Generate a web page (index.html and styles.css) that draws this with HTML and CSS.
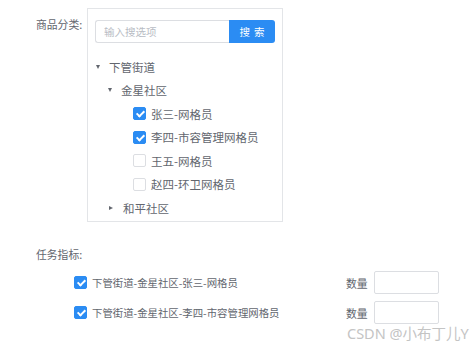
FILE: index.html
```html
<!DOCTYPE html>
<html lang="zh-CN">
<head>
    <meta charset="UTF-8">
    <title>商品分类</title>
    <link rel="stylesheet" href="styles.css">
</head>
<body>
    <div class="page">
        <div class="form-row">
            <label class="form-label">商品分类:</label>
            <div class="tree-panel">
                <div class="search">
                    <input type="text" placeholder="输入搜选项">
                    <button>搜索</button>
                </div>
                <ul class="tree">
                    <li class="node lv1"><span class="arrow down"></span>下管街道</li>
                    <li class="node lv2"><span class="arrow down"></span>金星社区</li>
                    <li class="node lv3"><span class="check on"></span>张三-网格员</li>
                    <li class="node lv3"><span class="check on"></span>李四-市容管理网格员</li>
                    <li class="node lv3"><span class="check"></span>王五-网格员</li>
                    <li class="node lv3"><span class="check"></span>赵四-环卫网格员</li>
                    <li class="node lv2"><span class="arrow right"></span>和平社区</li>
                </ul>
            </div>
        </div>

        <div class="task">
            <div class="form-label">任务指标:</div>
            <div class="task-row">
                <span class="check on"></span>
                <span class="task-name">下管街道-金星社区-张三-网格员</span>
                <span class="qty-label">数量</span>
                <input class="qty" type="text">
            </div>
            <div class="task-row">
                <span class="check on"></span>
                <span class="task-name">下管街道-金星社区-李四-市容管理网格员</span>
                <span class="qty-label">数量</span>
                <input class="qty" type="text">
            </div>
        </div>

        <div class="watermark">CSDN @小布丁儿Y</div>
    </div>
</body>
</html>
```

FILE: styles.css
```css
* {
    margin: 0;
    padding: 0;
    box-sizing: border-box;
    font-family: "Noto Sans CJK SC", "Noto Sans", sans-serif;
}

body {
    background: #fff;
    color: #62666e;
    font-size: 11.5px;
}

.page {
    position: relative;
    width: 474px;
    height: 349px;
    padding: 8px 0 0 36px;
}

.form-row {
    display: flex;
}

.form-label {
    width: 51px;
    margin-top: 8px;
    line-height: 16px;
    font-size: 10.8px;
    color: #62666e;
    white-space: nowrap;
}

.tree-panel {
    width: 196px;
    height: 214px;
    border: 1px solid #e3e5e8;
    padding: 11px 7px 0 7px;
}

.search {
    display: flex;
    height: 23px;
}

.search input {
    flex: 1;
    min-width: 0;
    border: 1px solid #dcdee2;
    border-right: none;
    border-radius: 3px 0 0 3px;
    padding: 0 8px;
    font-size: 10.5px;
    outline: none;
}

.search input::placeholder {
    color: #b8bcc4;
}

.search button {
    width: 46px;
    border: none;
    border-radius: 0 3px 3px 0;
    background: #2b8cf3;
    color: #fff;
    font-size: 10.5px;
    letter-spacing: 4px;
    padding-left: 4px;
}

.tree {
    list-style: none;
    margin-top: 12px;
}

.node {
    display: flex;
    align-items: center;
    height: 23.5px;
    white-space: nowrap;
}

.lv1 { padding-left: 1px; }
.lv2 { padding-left: 13px; }
.lv3 { padding-left: 38px; }

.arrow {
    width: 0;
    height: 0;
    margin-right: 9px;
}

.arrow.down {
    border-left: 2.5px solid transparent;
    border-right: 2.5px solid transparent;
    border-top: 4px solid #62666e;
}

.arrow.right {
    margin-left: 1px;
    margin-right: 10px;
    border-top: 2.5px solid transparent;
    border-bottom: 2.5px solid transparent;
    border-left: 4px solid #62666e;
}

.check {
    position: relative;
    flex: none;
    width: 13px;
    height: 13px;
    margin-right: 5px;
    border: 1px solid #dcdee2;
    border-radius: 2px;
    background: #fff;
}

.check.on {
    border-color: #2b8cf3;
    background: #2b8cf3;
}

.check.on::after {
    content: "";
    position: absolute;
    left: 3.5px;
    top: 1px;
    width: 3px;
    height: 6px;
    border: 2px solid #fff;
    border-top: none;
    border-left: none;
    transform: rotate(45deg);
}

.task {
    margin-top: 24px;
}

.task-row {
    display: flex;
    align-items: center;
    height: 23px;
    padding-left: 38px;
    margin-top: 7px;
}

.task .form-label + .task-row {
    margin-top: 9px;
}

.task-name {
    width: 254px;
    white-space: nowrap;
    font-size: 10.4px;
}

.qty-label {
    width: 28px;
    font-size: 10.8px;
}

.qty {
    width: 65px;
    height: 23px;
    border: 1px solid #dcdee2;
    border-radius: 2px;
    outline: none;
}

.watermark {
    position: absolute;
    left: 347px;
    top: 322px;
    font-size: 14.5px;
    color: #c4c4c4;
    font-family: "Noto Sans", "Noto Sans CJK SC", sans-serif;
    white-space: nowrap;
}
```
